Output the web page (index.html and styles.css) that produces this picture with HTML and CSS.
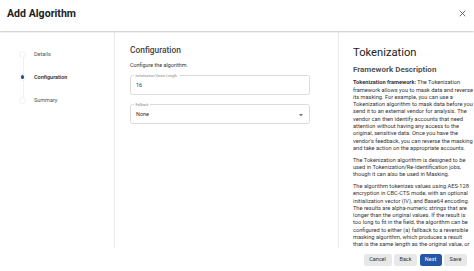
FILE: index.html
```html
<!DOCTYPE html>
<html>
<head>
<meta charset="utf-8">
<link rel="stylesheet" href="styles.css">
</head>
<body>
<div class="dialog">
  <header class="header">
    <h1 class="title">Add Algorithm</h1>
    <svg class="close" width="7" height="7" viewBox="0 0 10 10"><path d="M1 1L9 9M9 1L1 9" stroke="#555" stroke-width="1.2" fill="none"/></svg>
  </header>
  <div class="main">
    <nav class="sidebar">
      <ol class="steps">
        <li class="step"><span class="dot"></span><span class="label">Details</span></li>
        <li class="step active"><span class="dot"></span><span class="label">Configuration</span></li>
        <li class="step"><span class="dot"></span><span class="label">Summary</span></li>
      </ol>
    </nav>
    <section class="form">
      <h2 class="form-title">Configuration</h2>
      <p class="form-sub">Configure the algorithm.</p>
      <div class="field">
        <span class="field-label">Initialization Vector Length</span>
        <span class="field-value">16</span>
      </div>
      <div class="field select">
        <span class="field-label">Fallback</span>
        <span class="field-value">None</span>
        <svg class="caret" width="4" height="3" viewBox="0 0 4 3"><path d="M0 0H4L2 2.5Z" fill="#777"/></svg>
      </div>
    </section>
    <aside class="info">
      <h2 class="info-title">Tokenization</h2>
      <h3 class="info-sub">Framework Description</h3>
      <p><b>Tokenization framework:</b> The Tokenization framework allows you to mask data and reverse its masking. For example, you can use a Tokenization algorithm to mask data before you send it to an external vendor for analysis. The vendor can then identify accounts that need attention without having any access to the original, sensitive data. Once you have the vendor's feedback, you can reverse the masking and take action on the appropriate accounts.</p>
      <p>The Tokenization algorithm is designed to be used in Tokenization/Re-Identification jobs, though it can also be used in Masking.</p>
      <p>The algorithm tokenizes values using AES-128 encryption in CBC-CTS mode, with an optional initialization vector (IV), and Base64 encoding. The results are alpha-numeric strings that are longer than the original values. If the result is too long to fit in the field, the algorithm can be configured to either (a) fallback to a reversible masking algorithm, which produces a result that is the same length as the original value, or (b) fail.</p>
    </aside>
  </div>
  <footer class="footer">
    <button class="btn">Cancel</button>
    <button class="btn">Back</button>
    <button class="btn primary">Next</button>
    <button class="btn">Save</button>
  </footer>
</div>
</body>
</html>
```

FILE: styles.css
```css
* { box-sizing: border-box; }
html, body { margin: 0; padding: 0; background: #fff; }
body { font-family: Roboto, "Liberation Sans", sans-serif; color: #333; width: 474px; height: 271px; overflow: hidden; }
.dialog { display: flex; flex-direction: column; height: 271px; }
.header {
  height: 31px; flex: none; display: flex; justify-content: space-between; align-items: flex-start;
  padding: 7px 8px 0 7px; box-shadow: 0 1px 1.5px rgba(0,0,0,0.22); position: relative; z-index: 1;
}
.title { margin: 0; font-size: 10.6px; font-weight: 700; color: #222; line-height: 13px; }
.close { margin-top: 3px; }
.main { display: flex; height: 217px; flex: none; }
.sidebar { width: 115px; flex: none; border-right: 1px solid #ececec; padding-top: 19px; }
.steps { list-style: none; margin: 0; padding: 0 0 0 19px; display: flex; flex-direction: column; gap: 15px; position: relative; }
.steps::before { content: ""; position: absolute; left: 22.5px; top: 4px; bottom: 4px; width: 1px; background: #f3f1ea; }
.step { display: flex; align-items: center; height: 8px; font-size: 5.5px; color: #555; position: relative; }
.dot { width: 7px; height: 7px; border-radius: 50%; border: 0.6px solid #f0f0f0; background: #fff; margin-right: 8px; display: flex; align-items: center; justify-content: center; }
.step.active .dot::after { content: ""; width: 3.6px; height: 3.6px; border-radius: 50%; background: #2b4b8c; }
.step.active .label { color: #222; font-weight: 500; }
.form { width: 224px; flex: none; border-right: 1px solid #ececec; padding: 14px 28px 0 15px; }
.form-title { margin: 0; font-size: 8.4px; font-weight: 500; color: #444; line-height: 10px; }
.form-sub { margin: 6.5px 0 0; font-size: 5.4px; color: #333; line-height: 7px; }
.field { margin-top: 6.5px; height: 20px; border: 0.8px solid #dcdcdc; border-radius: 2.5px; position: relative; padding: 0 5px; display: flex; align-items: center; }
.field + .field { margin-top: 9px; }
.field-label { position: absolute; left: 3px; top: -2.5px; background: #fff; padding: 0 1.5px; font-size: 3.5px; line-height: 4px; color: #888; }
.field-value { font-size: 5.5px; color: #333; }
.select .caret { position: absolute; right: 6px; top: 9px; }
.info { flex: 1; padding: 14.5px 1px 0 14px; overflow: hidden; }
.info-title { margin: 0; font-size: 11.2px; font-weight: 400; color: #222; line-height: 13px; }
.info-sub { margin: 6.5px 0 0; font-size: 8px; font-weight: 700; color: #555; line-height: 10px; }
.info p { margin: 4.3px 0 0; font-size: 5.66px; line-height: 7.3px; color: #333; }
.info p + p { margin-top: 4.4px; }
.info b { font-weight: 700; }
.footer { flex: 1; display: flex; justify-content: flex-end; align-items: center; gap: 2.5px; padding: 0 7px 0 0; }
.btn { font-family: inherit; font-size: 5.5px; line-height: 7px; border: none; border-radius: 2.5px; background: #e8e8e8; color: #333; height: 12px; padding: 0; }
.btn:nth-child(1) { width: 28px; }
.btn:nth-child(2) { width: 23px; }
.btn:nth-child(3) { width: 22px; }
.btn:nth-child(4) { width: 23px; }
.btn.primary { background: #2457a8; color: #fff; }
```
